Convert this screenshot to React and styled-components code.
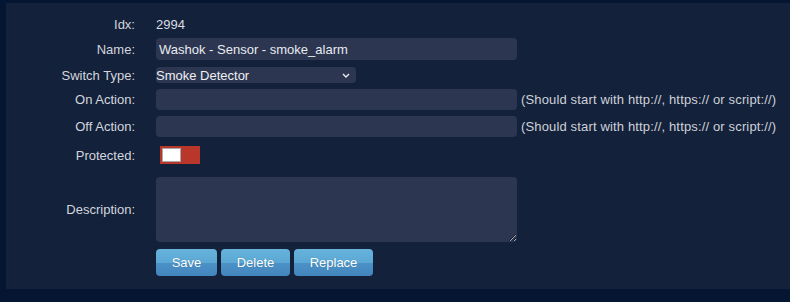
import React from "react";
import styled, { createGlobalStyle } from "styled-components";

const Global = createGlobalStyle`
  html, body { margin: 0; padding: 0; background: #041631; overflow: hidden; }
  body { width: 790px; height: 302px; font-family: "Liberation Sans", Arial, sans-serif; }
`;

const Panel = styled.div`
  margin: 3px 0 0 6px;
  width: 800px;
  height: 286px;
  box-sizing: border-box;
  background: #14213b;
  padding-top: 10px;
  display: grid;
  grid-template-columns: 129px 1fr;
  column-gap: 21px;
  grid-auto-rows: auto;
  align-content: start;
`;

const Label = styled.div`
  height: ${(p) => p.h}px;
  display: flex;
  align-items: center;
  justify-content: flex-end;
  color: #d2d6de;
  font-size: 13px;
`;

const Cell = styled.div`
  height: ${(p) => p.h}px;
  display: flex;
  align-items: center;
  gap: 4px;
  color: #d8dce4;
  font-size: 13px;
`;

const TextInput = styled.input`
  box-sizing: border-box;
  width: 361px;
  height: ${(p) => p.h || 21}px;
  margin: 0;
  border: none;
  border-radius: 4px;
  background: #2c3650;
  color: #e8ebf0;
  font-family: "Liberation Sans", Arial, sans-serif;
  font-size: 13px;
  padding: 0 3px;
  outline: none;
`;

const Hint = styled.span`
  color: #cdd1d9;
  font-size: 13px;
  letter-spacing: 0.15px;
  white-space: nowrap;
`;

const SelectBox = styled.div`
  box-sizing: border-box;
  width: 200px;
  height: 16px;
  border-radius: 4px;
  background: #2c3650;
  color: #eef0f4;
  font-size: 13px;
  display: flex;
  align-items: center;
  justify-content: space-between;
  padding: 0 6px 0 0;
`;

const Toggle = styled.div`
  box-sizing: border-box;
  width: 40px;
  height: 18px;
  margin-left: 4px;
  background: #b8372a;
  padding: 2px;
  display: flex;
`;

const Knob = styled.div`
  box-sizing: border-box;
  width: 19px;
  height: 14px;
  background: #ffffff;
  border: 1px solid #a9a9a9;
`;

const TextArea = styled.textarea`
  box-sizing: border-box;
  width: 361px;
  height: 65px;
  margin: 0;
  border: none;
  border-radius: 4px;
  background: #2c3650;
  color: #e8ebf0;
  font-family: "Liberation Sans", Arial, sans-serif;
  font-size: 13px;
  outline: none;
  color-scheme: dark;
`;

const Button = styled.button`
  box-sizing: border-box;
  width: ${(p) => p.w}px;
  height: 27px;
  margin: 0;
  border: none;
  border-radius: 4px;
  background: linear-gradient(to bottom, #65b3dc 0%, #5ca8d5 50%, #4b91c6 52%, #4385bd 100%);
  color: #ffffff;
  font-family: "Liberation Sans", Arial, sans-serif;
  font-size: 13px;
  text-shadow: 0 0 1px rgba(0, 0, 0, 0.25);
  padding: 0;
  cursor: pointer;
`;

const Chevron = () => (
  <svg width="8" height="5" viewBox="0 0 8 5">
    <path d="M1 1 L4 4 L7 1" fill="none" stroke="#e8ebf0" strokeWidth="1.4" />
  </svg>
);

export default function App() {
  return (
    <>
      <Global />
      <Panel>
        <Label h={22}>Idx:</Label>
        <Cell h={22}>2994</Cell>

        <Label h={28}>Name:</Label>
        <Cell h={28}>
          <TextInput h={22} defaultValue="Washok - Sensor - smoke_alarm" />
        </Cell>

        <Label h={24}>Switch Type:</Label>
        <Cell h={24}>
          <SelectBox>
            <span>Smoke Detector</span>
            <Chevron />
          </SelectBox>
        </Cell>

        <Label h={25}>On Action:</Label>
        <Cell h={25}>
          <TextInput />
          <Hint>(Should start with http://, https:// or script://)</Hint>
        </Cell>

        <Label h={28}>Off Action:</Label>
        <Cell h={28}>
          <TextInput />
          <Hint>(Should start with http://, https:// or script://)</Hint>
        </Cell>

        <Label h={30}>Protected:</Label>
        <Cell h={30}>
          <Toggle>
            <Knob />
          </Toggle>
        </Cell>

        <Label h={79}>Description:</Label>
        <Cell h={79}>
          <TextArea />
        </Cell>

        <Label h={27} />
        <Cell h={27}>
          <Button w={61}>Save</Button>
          <Button w={69}>Delete</Button>
          <Button w={79}>Replace</Button>
        </Cell>
      </Panel>
    </>
  );
}
